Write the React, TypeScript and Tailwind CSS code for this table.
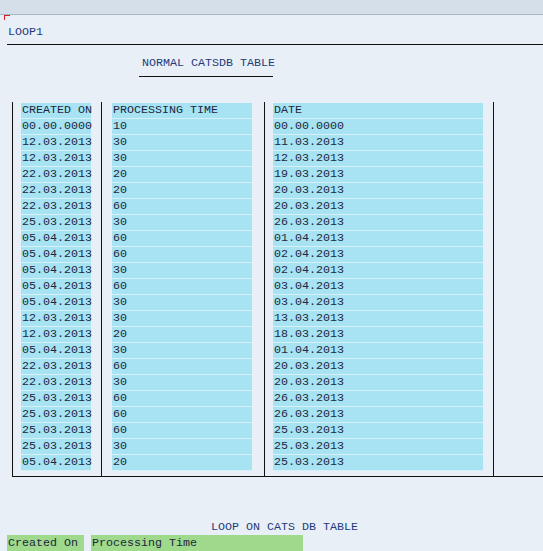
import React from "react";

const rows: [string, string, string][] = [
  ["00.00.0000", "10", "00.00.0000"],
  ["12.03.2013", "30", "11.03.2013"],
  ["12.03.2013", "30", "12.03.2013"],
  ["22.03.2013", "20", "19.03.2013"],
  ["22.03.2013", "20", "20.03.2013"],
  ["22.03.2013", "60", "20.03.2013"],
  ["25.03.2013", "30", "26.03.2013"],
  ["05.04.2013", "60", "01.04.2013"],
  ["05.04.2013", "60", "02.04.2013"],
  ["05.04.2013", "30", "02.04.2013"],
  ["05.04.2013", "60", "03.04.2013"],
  ["05.04.2013", "30", "03.04.2013"],
  ["12.03.2013", "30", "13.03.2013"],
  ["12.03.2013", "20", "18.03.2013"],
  ["05.04.2013", "30", "01.04.2013"],
  ["22.03.2013", "60", "20.03.2013"],
  ["22.03.2013", "30", "20.03.2013"],
  ["25.03.2013", "60", "26.03.2013"],
  ["25.03.2013", "60", "26.03.2013"],
  ["25.03.2013", "60", "25.03.2013"],
  ["25.03.2013", "30", "25.03.2013"],
  ["05.04.2013", "20", "25.03.2013"],
];

function Cell({ text }: { text: string }) {
  return (
    <div className="h-[16px] bg-[#a7e3f2] border-b border-[#d6f0f7] pl-[1px] leading-[15px] text-[#1c2740] whitespace-pre">
      {text}
    </div>
  );
}

function Column({ header, values, width }: { header: string; values: string[]; width: string }) {
  return (
    <div className={width}>
      <Cell text={header} />
      {values.map((v, i) => (
        <Cell key={i} text={v} />
      ))}
    </div>
  );
}

export default function App() {
  return (
    <div className="w-[543px] h-[551px] overflow-hidden bg-[#e9eff6] text-[11.67px] font-['Liberation_Mono','DejaVu_Sans_Mono',monospace] whitespace-nowrap">
      <div className="h-[15px] bg-[#d5dfe9] border-b border-[#a9b7c5]" />
      <div className="relative">
        <div className="absolute left-[4px] top-0 w-[6px] h-[5px] border-l border-t border-[#d02020]" />
        <div className="pt-[10px] pl-[8px] h-[24px] leading-[14px] text-[#233a7a]">LOOP1</div>
        <div className="ml-[7px] mt-[5px] h-px bg-[#111]" />
        <div className="mt-[11px] ml-[139px] w-[134px] pl-[3px] h-[14px] leading-[14px] text-[#233a7a]">
          NORMAL CATSDB TABLE
        </div>
        <div className="mt-[6px] ml-[139px] w-[134px] h-px bg-[#111]" />
        <div className="mt-[25px] ml-[12px] flex border-b border-[#111]">
          <div className="border-l border-[#111] pl-[8px] pr-[10px] pt-px pb-[5px]">
            <Column header="CREATED ON" values={rows.map((r) => r[0])} width="w-[70px]" />
          </div>
          <div className="border-l border-[#111] pl-[10px] pr-[12px] pt-px pb-[5px]">
            <Column header="PROCESSING TIME" values={rows.map((r) => r[1])} width="w-[140px]" />
          </div>
          <div className="border-l border-[#111] pl-[8px] pr-[10px] pt-px pb-[5px]">
            <Column header="DATE" values={rows.map((r) => r[2])} width="w-[210px]" />
          </div>
          <div className="border-l border-[#111] flex-1" />
        </div>
        <div className="mt-[43px] ml-[211px] h-[15px] leading-[14px] text-[#233a7a]">LOOP ON CATS DB TABLE</div>
        <div className="flex ml-[7px] h-[16px] leading-[16px] text-[#1c2740]">
          <div className="w-[77px] bg-[#9fd98b] pl-px">Created On</div>
          <div className="ml-[7px] w-[212px] bg-[#9fd98b] pl-px">Processing Time</div>
        </div>
      </div>
    </div>
  );
}
